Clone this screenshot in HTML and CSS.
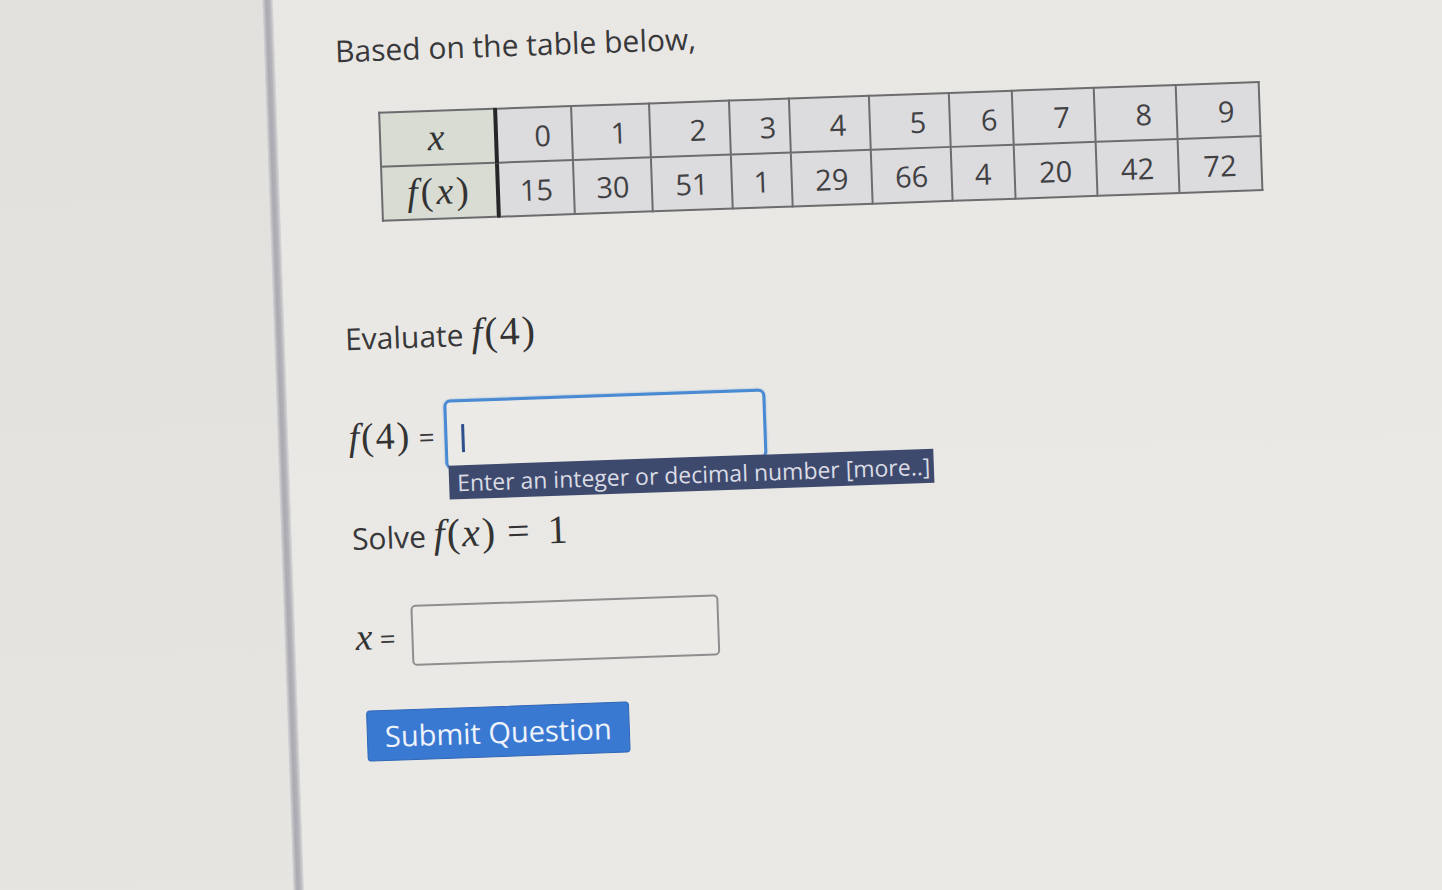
FILE: index.html
```html
<!DOCTYPE html>
<html lang="en">
<head>
<meta charset="utf-8">
<title>Question</title>
<link rel="stylesheet" href="styles.css">
</head>
<body>
<div class="page">
  <aside class="sidebar"></aside>
  <div class="divider"></div>
  <main class="main">
    <p class="intro">Based on the table below,</p>
    <table class="ftable">
      <colgroup>
        <col class="c-head">
        <col class="c76"><col class="c78"><col class="c80"><col class="c60"><col class="c80">
        <col class="c80"><col class="c63"><col class="c82"><col class="c82"><col class="c83">
      </colgroup>
      <tr class="row-top">
        <th class="head"><span class="math"><i>x</i></span></th>
        <td>0</td><td>1</td><td>2</td><td>3</td><td>4</td><td>5</td><td>6</td><td>7</td><td>8</td><td>9</td>
      </tr>
      <tr class="row-bottom">
        <th class="head"><span class="math"><i>f</i>(<i>x</i>)</span></th>
        <td>15</td><td>30</td><td>51</td><td>1</td><td>29</td><td>66</td><td>4</td><td>20</td><td>42</td><td>72</td>
      </tr>
    </table>

    <p class="prompt evaluate">Evaluate <span class="math"><i>f</i>(4)</span></p>

    <div class="answer-row row-f4">
      <label class="ans-label" for="a1"><span class="math"><i>f</i>(4)</span> =</label>
      <div class="field">
        <input id="a1" class="ans-input focused" type="text">
        <span class="caret"></span>
        <div class="tip">Enter an integer or decimal number [more..]</div>
      </div>
    </div>

    <p class="prompt solve">Solve <span class="math"><i>f</i>(<i>x</i>)<span class="rel">=</span>1</span></p>

    <div class="answer-row row-xin">
      <label class="ans-label" for="a2"><span class="math"><i>x</i></span> =</label>
      <div class="field">
        <input id="a2" class="ans-input plain" type="text">
      </div>
    </div>

    <button class="submit" type="button">Submit Question</button>
  </main>
</div>
</body>
</html>
```

FILE: styles.css
```css
html, body {
  margin: 0;
  padding: 0;
  height: 100%;
  overflow: hidden;
  background: #e8e7e3;
}

body {
  font-family: "Open Sans", "Liberation Sans", sans-serif;
  color: #38383a;
}

.page {
  display: flex;
  margin: -60px;
  min-height: 1010px;
  transform: rotate(-2deg);
  transform-origin: 60px 60px;
}

.sidebar {
  width: 322px;
  flex: none;
  background: linear-gradient(180deg, #e1e0dd 0%, #e4e3e0 60%, #e6e5e2 100%);
}

.divider {
  width: 11px;
  flex: none;
  background: linear-gradient(90deg, #d8d8da 0%, #aaaab0 35%, #b2b2b8 65%, #dedede 100%);
}

.main {
  flex: 1;
  padding: 102px 0 0 60px;
  background: linear-gradient(180deg, #e8e7e3 0%, #eae9e5 100%);
}

.intro,
.prompt {
  margin: 0;
  font-size: 30px;
  font-weight: 500;
  line-height: 41px;
}

.math {
  font-family: "Liberation Serif", "Times New Roman", serif;
  font-size: 40px;
  font-weight: 400;
  line-height: 1;
  letter-spacing: 2px;
  color: #333;
}

.math i {
  font-style: italic;
}

.rel {
  margin: 0 16px 0 10px;
}

/* table */
.ftable {
  margin: 42px 0 0 41px;
  border-collapse: collapse;
  table-layout: fixed;
  width: 882px;
  border: 2px solid #6c6c6e;
}

.c-head { width: 116px; }
.c60 { width: 60px; }
.c63 { width: 63px; }
.c76 { width: 76px; }
.c78 { width: 78px; }
.c80 { width: 80px; }
.c82 { width: 82px; }
.c83 { width: 83px; }

.ftable th,
.ftable td {
  height: 52px;
  padding: 0;
  border: 2px solid #6c6c6e;
  text-align: center;
  vertical-align: middle;
  font-size: 29px;
  font-weight: 400;
  color: #414143;
  background: #dcdbde;
}

.ftable th.head {
  background: #d8dcd3;
  border-right: 4px solid #262628;
}

.ftable th.head .math {
  font-size: 38px;
  letter-spacing: 3px;
}

.row-top td {
  padding-left: 16px;
}

.evaluate {
  margin-top: 94px;
}

/* answer rows */
.answer-row {
  display: flex;
  align-items: center;
  gap: 6px;
}

.ans-label {
  font-size: 28px;
  color: #3a3a3c;
  white-space: nowrap;
}

.row-f4 {
  margin-top: 44px;
}

.row-f4 .ans-label {
  width: 90px;
}

.row-f4 .math {
  font-size: 38px;
}

.row-xin {
  margin-top: 48px;
}

.row-xin .ans-label {
  width: 50px;
}

.row-xin .math {
  letter-spacing: 0;
  font-size: 38px;
}

.field {
  position: relative;
}

.ans-input {
  display: block;
  box-sizing: border-box;
  margin: 0;
  padding: 0 14px;
  font-family: "Open Sans", sans-serif;
  font-size: 28px;
  outline: none;
  background: #ebeae7;
}

.ans-input.focused {
  width: 322px;
  height: 70px;
  border: 3px solid #4a8ad2;
  border-radius: 7px;
  box-shadow: 0 0 2px #7aa8dc;
}

.ans-input.plain {
  width: 308px;
  height: 61px;
  border: 2px solid #8e8e8f;
  border-radius: 5px;
}

.caret {
  position: absolute;
  left: 17px;
  top: 25px;
  width: 3px;
  height: 28px;
  background: #2f4f8c;
}

.tip {
  position: absolute;
  left: 3px;
  top: 66px;
  height: 34px;
  padding: 0 8px;
  box-sizing: border-box;
  width: 485px;
  background: #3e4a6d;
  color: #dadbe4;
  font-size: 23px;
  line-height: 34px;
  white-space: nowrap;
}

.solve {
  margin-top: 44px;
}

.solve .math {
  letter-spacing: 2px;
}

.submit {
  display: block;
  margin: 43px 0 0 8px;
  height: 51px;
  padding: 0 17px;
  border: 1px solid #2f66b6;
  border-radius: 4px;
  background: #3a79d2;
  color: #eef3fb;
  font-family: "Open Sans", sans-serif;
  font-size: 29px;
  line-height: 49px;
}
```
